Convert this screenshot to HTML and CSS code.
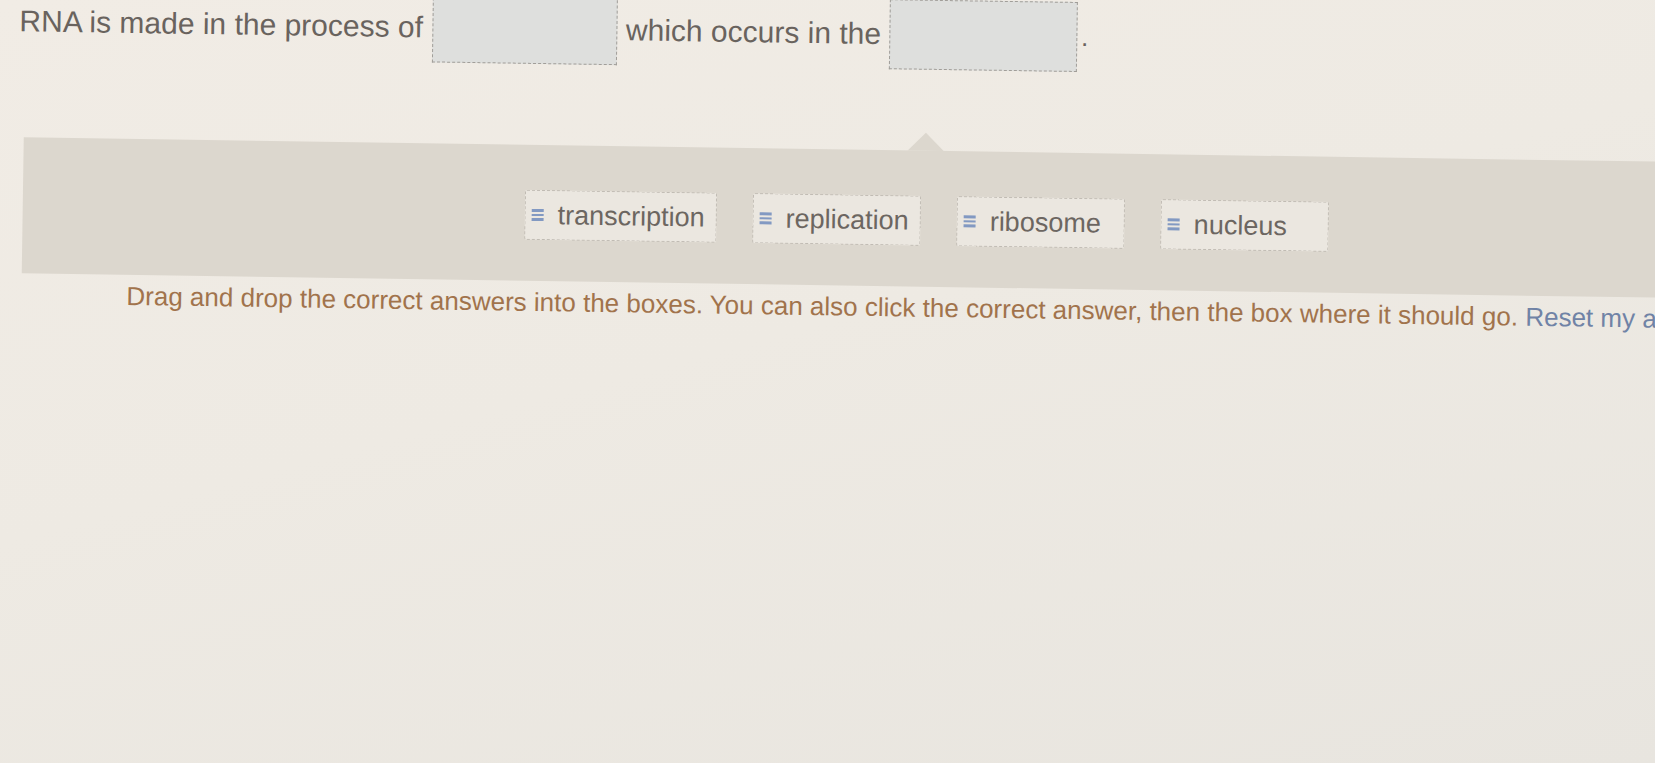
FILE: index.html
```html
<!DOCTYPE html>
<html lang="en">
<head>
<meta charset="utf-8">
<title>RNA drag and drop</title>
<link rel="stylesheet" href="styles.css">
</head>
<body>
<div class="page">
  <div class="sentence">
    <span class="phrase">RNA is made in the process of</span>
    <span class="drop"></span>
    <span class="phrase">which occurs in the</span>
    <span class="drop drop-wide"></span>
    <span class="phrase period">.</span>
  </div>

  <div class="bank">
    <div class="chip"><span class="grip"><i></i><i></i><i></i></span><span class="label">transcription</span></div>
    <div class="chip"><span class="grip"><i></i><i></i><i></i></span><span class="label">replication</span></div>
    <div class="chip"><span class="grip"><i></i><i></i><i></i></span><span class="label">ribosome</span></div>
    <div class="chip"><span class="grip"><i></i><i></i><i></i></span><span class="label">nucleus</span></div>
  </div>

  <p class="hint">Drag and drop the correct answers into the boxes. You can also click the correct answer, then the box where it should go. <a class="reset" href="#">Reset my answers</a></p>
</div>
</body>
</html>
```

FILE: styles.css
```css
html, body {
  margin: 0;
  padding: 0;
  height: 100%;
}

body {
  overflow: hidden;
  font-family: "Liberation Sans", Arial, sans-serif;
  background: linear-gradient(165deg, #f1ece5 0%, #eeeae3 45%, #e8e5df 100%);
  color: #6d6762;
}

.page {
  transform: rotate(0.85deg);
  transform-origin: 0 0;
}

.sentence {
  display: flex;
  align-items: center;
  height: 70px;
  margin-top: -14px;
  padding-left: 20px;
  white-space: nowrap;
}

.phrase {
  font-size: 30px;
  color: #69635e;
  line-height: 1;
}

.drop {
  box-sizing: border-box;
  width: 185px;
  height: 70px;
  margin: 0 9px;
  background: #dedfdd;
  border: 1.5px dashed #a19e99;
}

.drop-wide {
  width: 188px;
  margin: 0 4px 0 8px;
}

.period {
  font-size: 26px;
}

.bank {
  position: relative;
  display: flex;
  align-items: center;
  gap: 36px;
  height: 136px;
  margin-top: 81px;
  margin-left: 26px;
  margin-right: -220px;
  padding-left: 502px;
  padding-top: 4px;
  box-sizing: border-box;
  background: #dcd7ce;
}

.bank::before {
  content: "";
  position: absolute;
  left: 884px;
  top: -18px;
  width: 0;
  height: 0;
  border-left: 18px solid transparent;
  border-right: 18px solid transparent;
  border-bottom: 18px solid #dcd7ce;
}

.chip {
  box-sizing: border-box;
  display: flex;
  align-items: center;
  min-width: 168px;
  height: 50px;
  padding: 0 11px 0 6px;
  background: #ebe7e0;
  border: 1.5px dashed #c0bbb3;
  border-radius: 2px;
}

.grip {
  display: flex;
  flex-direction: column;
  gap: 2px;
  width: 12px;
  margin-right: 14px;
}

.grip i {
  display: block;
  height: 2.5px;
  background: #8299c2;
}

.label {
  font-size: 27px;
  color: #6c6661;
  line-height: 1;
}

.hint {
  margin: 6px 0 0 131px;
  font-size: 26px;
  line-height: 30px;
  color: #a1734c;
  white-space: nowrap;
}

.reset {
  color: #7083a6;
  text-decoration: none;
}
```
